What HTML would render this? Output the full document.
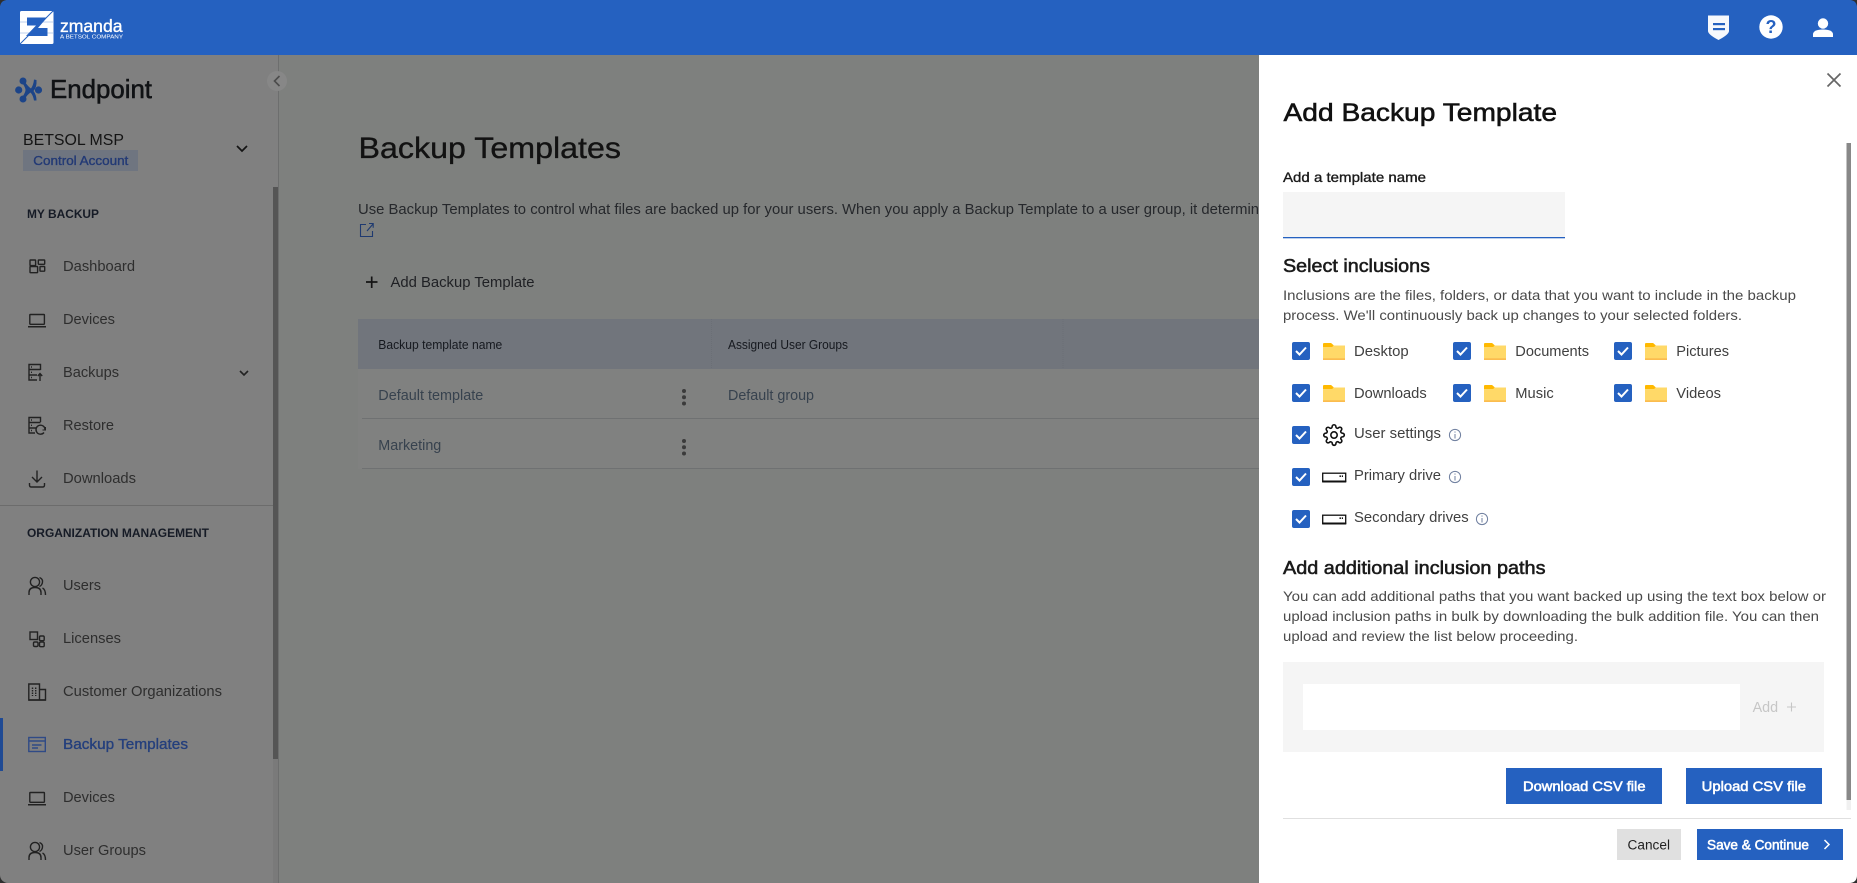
<!DOCTYPE html>
<html lang="en"><head><meta charset="utf-8"><title>Backup Templates</title>
<style>
html,body{margin:0;padding:0;background:#2f2f2f;width:1857px;height:883px;overflow:hidden}
svg{display:block;position:absolute;left:0;top:0}
text{font-family:"Liberation Sans",Arial,sans-serif;white-space:pre}
.nav{font-size:14.5px;fill:#2e2e2e}
.sec{font-size:12px;font-weight:700;fill:#161b26}
.ic{fill:none;stroke:#222;stroke-width:1.4}
.d{font-size:14px;fill:#4a4a4a}
.o{font-size:14.5px;fill:#404040}
.m{stroke-width:.35px}
.b{stroke-width:.55px}
</style></head><body>
<svg width="1857" height="883" viewBox="0 0 1857 883" xmlns="http://www.w3.org/2000/svg">
<rect x="0" y="0" width="1857" height="883" rx="8" fill="#808080"/>
<!-- main -->
<rect x="279" y="55" width="980" height="828" fill="#7e807e"/>
<!-- sidebar rail -->
<rect x="278" y="55" width="1" height="828" fill="#6d6e6e"/>
<rect x="273" y="187" width="5" height="572" fill="#555555"/>
<rect x="273" y="759" width="5" height="124" fill="#7a7a7a"/>
<circle cx="277" cy="81" r="10" fill="#878787"/>
<path d="M279.5 76 L274.5 81 L279.5 86" fill="none" stroke="#4c4c4c" stroke-width="1.6"/>
<!-- header -->
<path d="M8 0 H1849 Q1857 0 1857 8 V55 H0 V8 Q0 0 8 0Z" fill="#2561c0"/>
<!-- zmanda logo -->
<rect x="20" y="11" width="33.5" height="33" rx="1.5" fill="#fff"/>
<path d="M27 17.5 H47 L38 28 H47.5 V36 H26 L36 25.5 H27Z" fill="#2561c0"/>
<path d="M20 44 L53 11" stroke="#2561c0" stroke-width="1" fill="none"/>
<path d="M20 22 H53 M20 33 H53" stroke="#2561c0" stroke-width=".5" opacity=".6"/>
<text x="60" y="32" fill="#fff" class="m" stroke="#fff" textLength="62.5" lengthAdjust="spacingAndGlyphs" style="font-size:17.5px">zmanda</text>
<text x="60" y="38.5" fill="#fff" textLength="63" lengthAdjust="spacingAndGlyphs" style="font-size:5px">A BETSOL COMPANY</text>
<!-- header icons -->
<path d="M1708 15.5 H1729 V31 Q1729 34.5 1718.5 40 Q1708 34.5 1708 31Z" fill="#f6f8fc"/>
<rect x="1713" y="23" width="12" height="2.2" fill="#2561c0"/>
<rect x="1713" y="28" width="12" height="2.2" fill="#2561c0"/>
<circle cx="1771" cy="27" r="11.7" fill="#fff"/>
<text x="1771" y="33" text-anchor="middle" fill="#2561c0" style="font-size:18px;font-weight:700">?</text>
<circle cx="1823" cy="23.5" r="5.2" fill="#fff"/>
<path d="M1813 37 V34.5 Q1813 29.5 1823 29.5 Q1833 29.5 1833 34.5 V37Z" fill="#fff"/>

<!-- Endpoint logo -->
<g fill="#1c4488">
<circle cx="23" cy="81" r="3.5"/><circle cx="38.5" cy="90" r="3.6"/><circle cx="23" cy="99" r="3.5"/><circle cx="18.7" cy="90" r="3.6"/>
<path d="M25 82 Q28 86.5 31 88.5 Q33.5 85 34 79.5 L36.5 80 Q37 87 33.5 91 Q36.5 95 36.5 100.5 L34 100.5 Q33 95 30.5 92.5 Q28 94 25 98.5 L23 96 Q25.5 92 25.5 90 Q25.5 88 23 84Z"/>
</g>
<text x="50" y="98" fill="#101215" class="b" stroke="#101215" textLength="102" lengthAdjust="spacingAndGlyphs" style="font-size:26px">Endpoint</text>
<text x="23" y="145" fill="#141414" textLength="101" lengthAdjust="spacingAndGlyphs" style="font-size:16px">BETSOL MSP</text>
<rect x="23" y="150" width="115" height="21" fill="#6f7580"/>
<text x="33.3" y="165" fill="#233a75" class="m" stroke="#233a75" textLength="95" lengthAdjust="spacingAndGlyphs" style="font-size:12.5px">Control Account</text>
<path d="M237 146 L242 151 L247 146" fill="none" stroke="#141414" stroke-width="1.7"/>

<!-- nav -->
<text x="27" y="218" class="sec" textLength="72" lengthAdjust="spacingAndGlyphs">MY BACKUP</text>
<text x="27" y="537" class="sec" textLength="182" lengthAdjust="spacingAndGlyphs">ORGANIZATION MANAGEMENT</text>
<rect x="0" y="505" width="273" height="1" fill="#6c6c6c"/>

<g class="ic">
<rect x="30" y="260" width="5.6" height="5.6" rx=".5"/><rect x="38.3" y="260" width="6.4" height="4.3" rx=".5"/><rect x="30" y="266.5" width="7.6" height="6.2" rx=".5"/><rect x="40" y="266.5" width="4.7" height="4.7" rx=".5"/>
<rect x="29.8" y="314.5" width="14.6" height="9.8" rx=".5"/><path d="M28 326.7 H46" stroke-width="1.5"/>
<path d="M40.5 370 V364.5 H29 V380 H37 M29 369.5 H40.5 M29 375 H37"/><path d="M40 381 V373.5 M37.8 376 L40 373.5 L42.2 376"/><path d="M31 367 H32 M31 372.3 H32 M31 377.5 H32"/>
<path d="M40.5 422 V417.5 H29 V433 H35 M29 422.5 H40.5 M29 428 H36"/><path d="M31 420 H32 M31 425.3 H32 M31 430.5 H32"/><path d="M45 429.5 A4.5 4.5 0 1 0 44 432.5"/><path d="M45.5 427 V430 H42.5" stroke-width="1"/>
<path d="M37 470.5 V482 M32 477 L37 482 L42 477"/><path d="M29.5 483 V485 Q29.5 487 31 487 H43 Q44.5 487 44.5 485 V483"/>
<circle cx="35" cy="582" r="4.6"/><path d="M29 595 V592.5 Q29 587.5 35 587.5 Q41 587.5 41 592.5 V595"/><path d="M39.5 577.5 Q43 579 42.5 582 Q42.3 585 39.5 586.5 M42.5 588 Q45.5 589.5 45.5 595"/>
<rect x="30" y="632" width="7.5" height="7.5"/><rect x="39.5" y="636" width="4.7" height="4.7" rx="1.2"/><rect x="33.5" y="642" width="4.5" height="4.5" rx="1.2"/><rect x="39.5" y="642" width="4.7" height="4.7" rx="1.2"/>
<path d="M28.8 700 V684 H39.5 V700Z M39.5 689.5 H45.5 V700 H39.5"/><path d="M32.5 687.5 V696 M35.7 687.5 V696" stroke-dasharray="1.5 1"/><path d="M28.5 700 H45.8"/>
<g stroke="#2f4a86"><rect x="28.8" y="737.5" width="16.5" height="14"/><path d="M28.8 741 H45.3"/><path d="M32 745 H41.5 M32 748 H38"/></g>
<rect x="29.8" y="792.5" width="14.6" height="9.8" rx=".5"/><path d="M28 804.7 H46" stroke-width="1.5"/>
<circle cx="35" cy="847" r="4.6"/><path d="M29 860 V857.5 Q29 852.5 35 852.5 Q41 852.5 41 857.5 V860"/><path d="M39.5 842.5 Q43 844 42.5 847 Q42.3 850 39.5 851.5 M42.5 853 Q45.5 854.5 45.5 860"/>
</g>
<text x="63" y="271" class="nav" textLength="72" lengthAdjust="spacingAndGlyphs">Dashboard</text>
<text x="63" y="324" class="nav" textLength="52" lengthAdjust="spacingAndGlyphs">Devices</text>
<text x="63" y="377" class="nav" textLength="56" lengthAdjust="spacingAndGlyphs">Backups</text>
<path d="M240 371 L244 375 L248 371" fill="none" stroke="#222" stroke-width="1.6"/>
<text x="63" y="430" class="nav" textLength="51" lengthAdjust="spacingAndGlyphs">Restore</text>
<text x="63" y="483" class="nav" textLength="73" lengthAdjust="spacingAndGlyphs">Downloads</text>
<text x="63" y="590" class="nav" textLength="38" lengthAdjust="spacingAndGlyphs">Users</text>
<text x="63" y="643" class="nav" textLength="58" lengthAdjust="spacingAndGlyphs">Licenses</text>
<text x="63" y="696" class="nav" textLength="159" lengthAdjust="spacingAndGlyphs">Customer Organizations</text>
<rect x="0" y="718" width="3" height="53" fill="#1f4a94"/>
<text x="63" y="749" class="nav m" stroke="#243f7c" style="fill:#243f7c" textLength="125" lengthAdjust="spacingAndGlyphs">Backup Templates</text>
<text x="63" y="802" class="nav" textLength="52" lengthAdjust="spacingAndGlyphs">Devices</text>
<text x="63" y="855" class="nav" textLength="83" lengthAdjust="spacingAndGlyphs">User Groups</text>

<!-- main content -->
<text x="358.5" y="158" fill="#121212" class="m" stroke="#121212" textLength="262.5" lengthAdjust="spacingAndGlyphs" style="font-size:30px">Backup Templates</text>
<text x="358" y="214" fill="#26282c" textLength="480" lengthAdjust="spacingAndGlyphs" style="font-size:14.5px">Use Backup Templates to control what files are backed up for your users.</text>
<text x="842" y="214" fill="#26282c" textLength="417" lengthAdjust="spacingAndGlyphs" style="font-size:14.5px">When you apply a Backup Template to a user group, it determin</text>
<path d="M366 224.5 H360.5 V236.5 H372.5 V231 M367 231 L373 224 M369 223.5 H373.2 V227.7" fill="none" stroke="#1f3a70" stroke-width="1.1"/>
<path d="M366 282 H377.5 M371.7 276.5 V288" fill="none" stroke="#141414" stroke-width="1.7"/>
<text x="390.5" y="287" fill="#1f2024" textLength="144" lengthAdjust="spacingAndGlyphs" style="font-size:14.5px">Add Backup Template</text>

<rect x="358" y="319" width="901" height="50" fill="#71757c"/>
<path d="M711.5 319 V369 M1063 319 V369" stroke="#6b6f76" stroke-width="1" stroke-dasharray="1 1"/>
<rect x="358" y="369" width="901" height="100" fill="#808180"/>
<text x="378.3" y="349" fill="#16191f" textLength="124" lengthAdjust="spacingAndGlyphs" style="font-size:12.5px">Backup template name</text>
<text x="728" y="349" fill="#16191f" textLength="120" lengthAdjust="spacingAndGlyphs" style="font-size:12.5px">Assigned User Groups</text>
<text x="378.3" y="400" fill="#37424e" textLength="105" lengthAdjust="spacingAndGlyphs" style="font-size:14.5px">Default template</text>
<text x="728" y="400" fill="#37424e" textLength="86" lengthAdjust="spacingAndGlyphs" style="font-size:14.5px">Default group</text>
<text x="378.3" y="450" fill="#37424e" textLength="63" lengthAdjust="spacingAndGlyphs" style="font-size:14.5px">Marketing</text>
<rect x="362" y="418" width="897" height="1" fill="#6f7172"/>
<rect x="362" y="468" width="897" height="1" fill="#6f7172"/>
<g fill="#3b3b3b"><circle cx="684" cy="391" r="2"/><circle cx="684" cy="397.3" r="2"/><circle cx="684" cy="403.5" r="2"/><circle cx="684" cy="441" r="2"/><circle cx="684" cy="447.3" r="2"/><circle cx="684" cy="453.5" r="2"/></g>

<!-- drawer -->
<path d="M1259 55 H1857 V875 Q1857 883 1849 883 H1259Z" fill="#fff"/>
<path d="M1827.5 73.5 L1840.5 86.5 M1840.5 73.5 L1827.5 86.5" stroke="#666" stroke-width="1.7" fill="none"/>
<text x="1283.5" y="121" fill="#111" class="b" stroke="#111" textLength="273.5" lengthAdjust="spacingAndGlyphs" style="font-size:25px">Add Backup Template</text>
<text x="1283" y="182" fill="#1a1a1a" class="m" stroke="#1a1a1a" textLength="143" lengthAdjust="spacingAndGlyphs" style="font-size:14px">Add a template name</text>
<rect x="1283" y="192" width="282" height="46" fill="#f5f5f5"/>
<rect x="1283" y="237" width="282" height="1.3" fill="#2561c0"/>
<rect x="1846.5" y="143" width="4.5" height="657" fill="#888"/>
<rect x="1846.5" y="800" width="4.5" height="10" fill="#f0f0f0"/>
<text x="1283" y="272" fill="#1a1a1a" class="b" stroke="#1a1a1a" textLength="147" lengthAdjust="spacingAndGlyphs" style="font-size:18px">Select inclusions</text>
<text x="1283" y="300" class="d" textLength="513" lengthAdjust="spacingAndGlyphs">Inclusions are the files, folders, or data that you want to include in the backup</text>
<text x="1283" y="320" class="d" textLength="459" lengthAdjust="spacingAndGlyphs">process. We'll continuously back up changes to your selected folders.</text>

<!-- checkboxes -->
<g fill="#2561c0">
<rect x="1292" y="342" width="18" height="18" rx="2"/><rect x="1453" y="342" width="18" height="18" rx="2"/><rect x="1614" y="342" width="18" height="18" rx="2"/>
<rect x="1292" y="384" width="18" height="18" rx="2"/><rect x="1453" y="384" width="18" height="18" rx="2"/><rect x="1614" y="384" width="18" height="18" rx="2"/>
<rect x="1292" y="426" width="18" height="18" rx="2"/><rect x="1292" y="468" width="18" height="18" rx="2"/><rect x="1292" y="510" width="18" height="18" rx="2"/>
</g>
<g fill="none" stroke="#fff" stroke-width="2">
<path d="M1296 351 L1299.5 354.5 L1306 347.5"/><path d="M1457 351 L1460.5 354.5 L1467 347.5"/><path d="M1618 351 L1621.5 354.5 L1628 347.5"/>
<path d="M1296 393 L1299.5 396.5 L1306 389.5"/><path d="M1457 393 L1460.5 396.5 L1467 389.5"/><path d="M1618 393 L1621.5 396.5 L1628 389.5"/>
<path d="M1296 435 L1299.5 438.5 L1306 431.5"/><path d="M1296 477 L1299.5 480.5 L1306 473.5"/><path d="M1296 519 L1299.5 522.5 L1306 515.5"/>
</g>
<!-- folders -->
<g transform="translate(1323,343)"><path d="M0 1.5 Q0 0 1.5 0 H8 L11 2.5 H22 V17 H0Z" fill="#ffd968"/><path d="M0 1 Q0 0 1.5 0 H8 L10.5 2.2 Q10 4 8 4 H0Z" fill="#ffb900"/><rect x="0" y="15.3" width="22" height="1.7" fill="#fbbc4e"/></g>
<g transform="translate(1484,343)"><path d="M0 1.5 Q0 0 1.5 0 H8 L11 2.5 H22 V17 H0Z" fill="#ffd968"/><path d="M0 1 Q0 0 1.5 0 H8 L10.5 2.2 Q10 4 8 4 H0Z" fill="#ffb900"/><rect x="0" y="15.3" width="22" height="1.7" fill="#fbbc4e"/></g>
<g transform="translate(1645,343)"><path d="M0 1.5 Q0 0 1.5 0 H8 L11 2.5 H22 V17 H0Z" fill="#ffd968"/><path d="M0 1 Q0 0 1.5 0 H8 L10.5 2.2 Q10 4 8 4 H0Z" fill="#ffb900"/><rect x="0" y="15.3" width="22" height="1.7" fill="#fbbc4e"/></g>
<g transform="translate(1323,385)"><path d="M0 1.5 Q0 0 1.5 0 H8 L11 2.5 H22 V17 H0Z" fill="#ffd968"/><path d="M0 1 Q0 0 1.5 0 H8 L10.5 2.2 Q10 4 8 4 H0Z" fill="#ffb900"/><rect x="0" y="15.3" width="22" height="1.7" fill="#fbbc4e"/></g>
<g transform="translate(1484,385)"><path d="M0 1.5 Q0 0 1.5 0 H8 L11 2.5 H22 V17 H0Z" fill="#ffd968"/><path d="M0 1 Q0 0 1.5 0 H8 L10.5 2.2 Q10 4 8 4 H0Z" fill="#ffb900"/><rect x="0" y="15.3" width="22" height="1.7" fill="#fbbc4e"/></g>
<g transform="translate(1645,385)"><path d="M0 1.5 Q0 0 1.5 0 H8 L11 2.5 H22 V17 H0Z" fill="#ffd968"/><path d="M0 1 Q0 0 1.5 0 H8 L10.5 2.2 Q10 4 8 4 H0Z" fill="#ffb900"/><rect x="0" y="15.3" width="22" height="1.7" fill="#fbbc4e"/></g>
<!-- gear -->
<g transform="translate(1322.8,423.8) scale(.935)" fill="none" stroke="#111" stroke-width="1.7"><circle cx="12" cy="12" r="3.4"/><path d="M19.4 15a1.65 1.65 0 0 0 .33 1.82l.06.06a2 2 0 0 1 0 2.83 2 2 0 0 1-2.83 0l-.06-.06a1.65 1.65 0 0 0-1.82-.33 1.65 1.65 0 0 0-1 1.51V21a2 2 0 0 1-2 2 2 2 0 0 1-2-2v-.09A1.65 1.65 0 0 0 9 19.4a1.65 1.65 0 0 0-1.82.33l-.06.06a2 2 0 0 1-2.83 0 2 2 0 0 1 0-2.83l.06-.06a1.65 1.65 0 0 0 .33-1.82 1.65 1.65 0 0 0-1.51-1H3a2 2 0 0 1-2-2 2 2 0 0 1 2-2h.09A1.65 1.65 0 0 0 4.6 9a1.65 1.65 0 0 0-.33-1.82l-.06-.06a2 2 0 0 1 0-2.83 2 2 0 0 1 2.83 0l.06.06a1.65 1.65 0 0 0 1.82.33H9a1.65 1.65 0 0 0 1-1.51V3a2 2 0 0 1 2-2 2 2 0 0 1 2 2v.09a1.65 1.65 0 0 0 1 1.51 1.65 1.65 0 0 0 1.82-.33l.06-.06a2 2 0 0 1 2.83 0 2 2 0 0 1 0 2.83l-.06.06a1.65 1.65 0 0 0-.33 1.82V9a1.65 1.65 0 0 0 1.51 1H21a2 2 0 0 1 2 2 2 2 0 0 1-2 2h-.09a1.65 1.65 0 0 0-1.51 1z"/></g>
<!-- drives -->
<g fill="none" stroke="#111"><rect x="1322.7" y="473.2" width="23" height="8.3" stroke-width="1.3"/><path d="M1322.2 481.5 H1346.2" stroke-width="2"/><path d="M1339.5 476.2 H1343" stroke-width="1.6" stroke-dasharray="1.4 .9"/>
<rect x="1322.7" y="515.2" width="23" height="8.3" stroke-width="1.3"/><path d="M1322.2 523.5 H1346.2" stroke-width="2"/><path d="M1339.5 518.2 H1343" stroke-width="1.6" stroke-dasharray="1.4 .9"/></g>

<text x="1354" y="356" class="o" textLength="54.7" lengthAdjust="spacingAndGlyphs">Desktop</text>
<text x="1515.3" y="356" class="o" textLength="73.7" lengthAdjust="spacingAndGlyphs">Documents</text>
<text x="1676.3" y="356" class="o" textLength="52.7" lengthAdjust="spacingAndGlyphs">Pictures</text>
<text x="1354" y="398" class="o" textLength="72.7" lengthAdjust="spacingAndGlyphs">Downloads</text>
<text x="1515.3" y="398" class="o" textLength="38.4" lengthAdjust="spacingAndGlyphs">Music</text>
<text x="1676.3" y="398" class="o" textLength="44.7" lengthAdjust="spacingAndGlyphs">Videos</text>
<text x="1354" y="438" class="o" textLength="87" lengthAdjust="spacingAndGlyphs">User settings</text>
<text x="1354" y="480" class="o" textLength="87" lengthAdjust="spacingAndGlyphs">Primary drive</text>
<text x="1354" y="522" class="o" textLength="114.7" lengthAdjust="spacingAndGlyphs">Secondary drives</text>
<!-- info icons -->
<g fill="none" stroke="#6f7f9f" stroke-width="1"><circle cx="1455" cy="435" r="5.6"/><path d="M1455 434 V438.5 M1455 431.5 V432.6"/><circle cx="1455" cy="477" r="5.6"/><path d="M1455 476 V480.5 M1455 473.5 V474.6"/><circle cx="1482" cy="519" r="5.6"/><path d="M1482 518 V522.5 M1482 515.5 V516.6"/></g>

<text x="1283" y="574" fill="#1a1a1a" class="b" stroke="#1a1a1a" textLength="262.5" lengthAdjust="spacingAndGlyphs" style="font-size:18px">Add additional inclusion paths</text>
<text x="1283" y="601" class="d" textLength="543" lengthAdjust="spacingAndGlyphs">You can add additional paths that you want backed up using the text box below or</text>
<text x="1283" y="621" class="d" textLength="536" lengthAdjust="spacingAndGlyphs">upload inclusion paths in bulk by downloading the bulk addition file. You can then</text>
<text x="1283" y="641" class="d" textLength="295" lengthAdjust="spacingAndGlyphs">upload and review the list below proceeding.</text>

<rect x="1283" y="662" width="541" height="90" fill="#f5f5f5"/>
<rect x="1303" y="684" width="437" height="46" fill="#fff"/>
<text x="1752.6" y="712" fill="#c6c6c6" textLength="25.5" lengthAdjust="spacingAndGlyphs" style="font-size:14.5px">Add</text>
<path d="M1787 707 H1796 M1791.5 702.5 V711.5" stroke="#c6c6c6" stroke-width="1.1" fill="none"/>

<rect x="1506" y="768" width="156" height="36" fill="#2561c0"/>
<text x="1523" y="791" fill="#fff" class="b" stroke="#fff" textLength="122.5" lengthAdjust="spacingAndGlyphs" style="font-size:14px">Download CSV file</text>
<rect x="1686" y="768" width="136" height="36" fill="#2561c0"/>
<text x="1701.7" y="791" fill="#fff" class="b" stroke="#fff" textLength="104.3" lengthAdjust="spacingAndGlyphs" style="font-size:14px">Upload CSV file</text>

<rect x="1283" y="818" width="568" height="1" fill="#e0e0e0"/>
<rect x="1617" y="829" width="64" height="31" fill="#e0e0e0"/>
<text x="1627.5" y="849.5" fill="#222" textLength="42.5" lengthAdjust="spacingAndGlyphs" style="font-size:13.5px">Cancel</text>
<rect x="1697" y="829" width="146" height="31" fill="#2561c0"/>
<text x="1707" y="849.5" fill="#fff" class="b" stroke="#fff" textLength="102" lengthAdjust="spacingAndGlyphs" style="font-size:13.5px">Save &amp; Continue</text>
<path d="M1824.5 840 L1829 844.5 L1824.5 849" fill="none" stroke="#fff" stroke-width="1.5"/>
</svg>
</body></html>
